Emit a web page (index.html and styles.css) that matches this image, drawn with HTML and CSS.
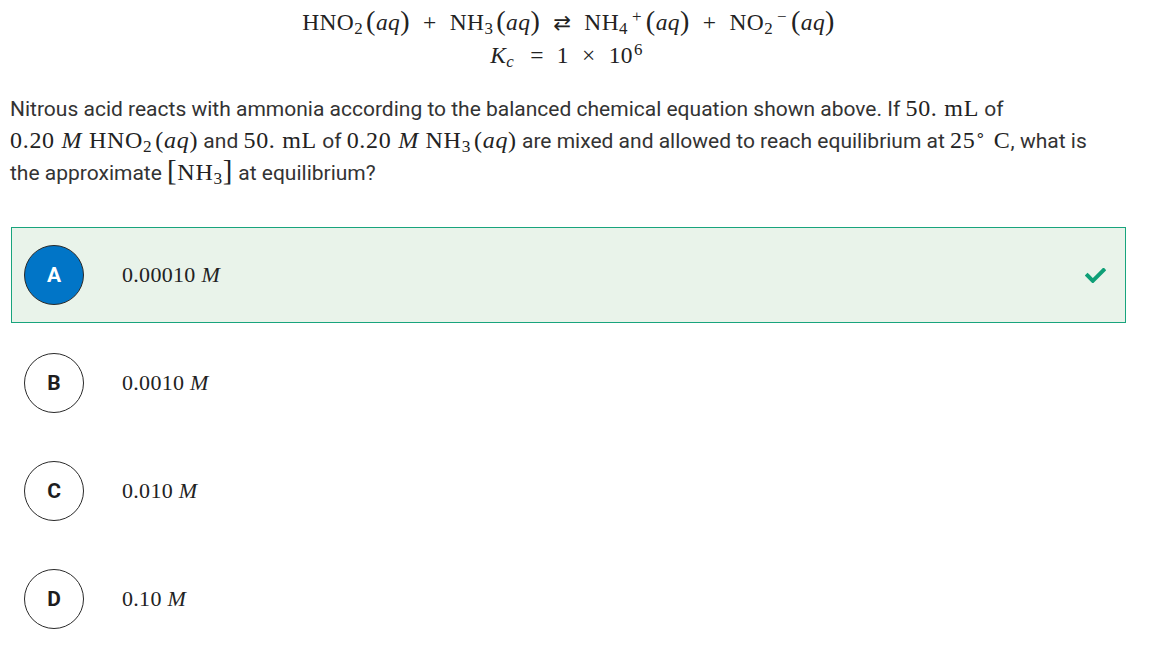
FILE: index.html
```html
<!DOCTYPE html>
<html lang="en">
<head>
<meta charset="utf-8">
<title>Question</title>
<link rel="stylesheet" href="styles.css">
</head>
<body>
<main class="page">
  <div class="equation">
    <div class="eq-line">HNO<sub>2</sub><span class="paren">(</span><span class="mi">aq</span><span class="paren">)</span><span class="op">+</span>NH<sub>3</sub><span class="paren">(</span><span class="mi">aq</span><span class="paren">)</span><span class="op arrow">⇄</span>NH<sub>4</sub><sup>+</sup><span class="paren">(</span><span class="mi">aq</span><span class="paren">)</span><span class="op">+</span>NO<sub>2</sub><sup>−</sup><span class="paren">(</span><span class="mi">aq</span><span class="paren">)</span></div>
    <div class="eq-line"><span class="mi">K</span><sub class="mi">c</sub><span class="op">=</span>1<span class="op">×</span>10<sup>6</sup></div>
  </div>

  <p class="question">Nitrous acid reacts with ammonia according to the balanced chemical equation shown above. If <span class="m">50. mL</span> of <span class="m">0.20 <span class="mi">M</span> HNO<sub>2</sub><span class="sp"></span>(<span class="mi">aq</span>)</span> and <span class="m">50. mL</span> of <span class="m">0.20 <span class="mi">M</span> NH<sub>3</sub><span class="sp"></span>(<span class="mi">aq</span>)</span> are mixed and allowed to reach equilibrium at <span class="m">25<sup>∘</sup> C</span>, what is the approximate <span class="m"><span class="bracket">[</span>NH<sub>3</sub><span class="bracket">]</span></span> at equilibrium?</p>

  <ul class="options">
    <li class="option correct">
      <span class="letter">A</span>
      <span class="answer">0.00010 <span class="mi">M</span></span>
      <svg class="check" width="21" height="15" viewBox="0 0 21 15" aria-hidden="true"><path d="M2.5 7.5 L7.8 12.8 L18.5 2.2" fill="none" stroke="#0e9f77" stroke-width="4" stroke-linecap="square" stroke-linejoin="miter"/></svg>
    </li>
    <li class="option">
      <span class="letter">B</span>
      <span class="answer">0.0010 <span class="mi">M</span></span>
    </li>
    <li class="option">
      <span class="letter">C</span>
      <span class="answer">0.010 <span class="mi">M</span></span>
    </li>
    <li class="option">
      <span class="letter">D</span>
      <span class="answer">0.10 <span class="mi">M</span></span>
    </li>
  </ul>
</main>
</body>
</html>
```

FILE: styles.css
```css
* { box-sizing: border-box; }
html, body {
  margin: 0;
  padding: 0;
  background: #ffffff;
}
body {
  font-family: Roboto, "Liberation Sans", Arial, sans-serif;
  color: #333333;
}
.page {
  width: 1126px;
  padding-left: 11px;
}
.equation {
  font-family: "Liberation Serif", "Times New Roman", serif;
  font-size: 23.5px;
  letter-spacing: 0.4px;
  color: #222222;
  text-align: center;
  padding-top: 6px;
}
.eq-line {
  line-height: 33px;
  height: 33px;
  white-space: nowrap;
}
.equation sub, .question sub {
  font-size: 0.72em;
  vertical-align: -0.22em;
  line-height: 0;
}
.equation sub { margin-right: 3px; }
.equation sup, .question sup {
  font-size: 0.72em;
  vertical-align: 0.45em;
  line-height: 0;
}
.equation sup { margin-left: 1px; margin-right: 4px; }
.mi { font-style: italic; }
.paren { font-size: 1.2em; line-height: 0; }
.op { padding: 0 13px; }
.arrow { font-family: "DejaVu Sans", sans-serif; font-size: 0.9em; }
.question {
  margin: 21px 0 0 -1px;
  padding-right: 18px;
  font-size: 21px;
  line-height: 32px;
  color: #333333;
}
.m {
  font-family: "Liberation Serif", "Times New Roman", serif;
  font-size: 24px;
  letter-spacing: 0.7px;
  line-height: 0;
  white-space: nowrap;
  color: #222222;
}
.sp { display: inline-block; width: 3px; }
.bracket { font-size: 1.2em; line-height: 0; }
.options {
  list-style: none;
  margin: 38px 0 0 0;
  padding: 0;
  display: flex;
  flex-direction: column;
  gap: 12px;
}
.option {
  height: 96px;
  display: flex;
  align-items: center;
  padding: 0 19px 0 12px;
  border: 1px solid transparent;
}
.option.correct {
  background: #e9f3ea;
  border-color: #18a47d;
}
.letter {
  width: 60px;
  height: 60px;
  flex: 0 0 60px;
  border-radius: 50%;
  border: 1px solid #2a2a2a;
  display: flex;
  align-items: center;
  justify-content: center;
  font-family: Roboto, "Liberation Sans", Arial, sans-serif;
  font-weight: 700;
  font-size: 21px;
  color: #1e1e1e;
  background: #ffffff;
}
.option.correct .letter {
  background: #0175c7;
  color: #ffffff;
}
.answer {
  margin-left: 38px;
  font-family: "Liberation Serif", "Times New Roman", serif;
  font-size: 22px;
  letter-spacing: 0.3px;
  color: #222222;
  flex: 1;
}
.check {
  display: block;
}
```
